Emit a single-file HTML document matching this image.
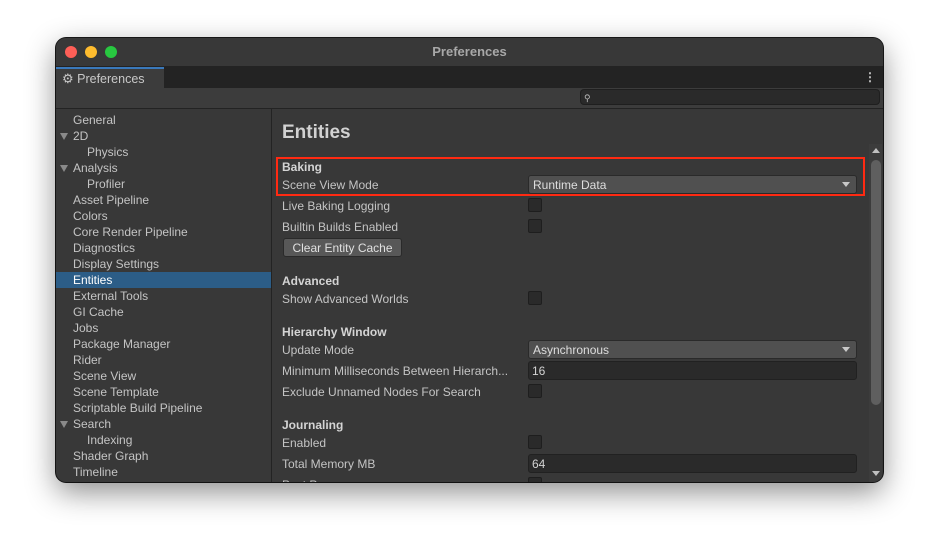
<!DOCTYPE html>
<html><head><style>
*{margin:0;padding:0;box-sizing:border-box}
body{width:939px;height:556px;background:#fff;position:relative;overflow:hidden;font-family:"Liberation Sans",sans-serif;font-size:12px;color:#c4c4c4}
.win{position:absolute;left:56px;top:38px;width:827px;height:444px;border-radius:10px;overflow:hidden;background:#383838;box-shadow:0 10px 30px rgba(0,0,0,.45),0 0 0 1px #1a1a1a}
.t{position:absolute;white-space:nowrap;line-height:16px;padding-top:1px}
.b{font-weight:bold;color:#d4d4d4}
.cb{position:absolute;width:14px;height:14px;background:#2a2a2a;border:1px solid #1e1e1e;border-radius:2px}
.dd{position:absolute;left:472px;width:329px;height:19px;background:#505050;border:1px solid #2a2a2a;border-radius:3px;padding-left:4px;line-height:18px;color:#dedede}
.dd:after{content:"";position:absolute;right:6px;top:6px;border-left:4px solid transparent;border-right:4px solid transparent;border-top:5px solid #c8c8c8}
.fld{position:absolute;left:472px;width:329px;height:19px;background:#2a2a2a;border:1px solid #212121;border-radius:3px;padding-left:3px;line-height:18px;color:#d2d2d2}
.tri{position:absolute;width:0;height:0;border-left:4px solid transparent;border-right:4px solid transparent;border-top:7px solid #8a8a8a}
</style></head><body>
<div class="win">
 <div style="position:absolute;left:0;top:0;width:827px;height:28px;background:#383838"></div>
 <div style="position:absolute;left:9px;top:8px;width:12px;height:12px;border-radius:6px;background:#fe5f57"></div>
 <div style="position:absolute;left:29px;top:8px;width:12px;height:12px;border-radius:6px;background:#febc2e"></div>
 <div style="position:absolute;left:49px;top:8px;width:12px;height:12px;border-radius:6px;background:#28c840"></div>
 <div class="t" style="left:0;width:827px;text-align:center;top:5px;font-weight:bold;color:#a8a8a8;font-size:13px">Preferences</div>
 <div style="position:absolute;left:0;top:28px;width:827px;height:22px;background:#232323"></div>
 <div style="position:absolute;left:0;top:29px;width:108px;height:22px;background:#3c3c3c;border-top:2px solid #3a79bb"></div>
 <div class="t" style="left:6px;top:32px;color:#c8c8c8;font-size:12.5px"><span style="font-size:13px">⚙</span> Preferences</div>
 <div class="t" style="left:808px;top:30px;color:#c8c8c8;font-weight:bold">⋮</div>
 <div style="position:absolute;left:0;top:50px;width:827px;height:21px;background:#3c3c3c;border-bottom:1px solid #232323"></div>
 <div style="position:absolute;left:524px;top:51px;width:300px;height:16px;background:#2a2a2a;border:1px solid #1f1f1f;border-radius:4px"></div>
 <div class="t" style="left:528px;top:51px;font-size:9px;color:#bbb">⚲</div>
 <div style="position:absolute;left:215px;top:71px;width:1px;height:373px;background:#232323"></div>
 <div style="position:absolute;left:0;top:234px;width:215px;height:16px;background:#2c5d87"></div>
 <div class="t" style="left:17px;top:73px">General</div>
 <div class="tri" style="left:4px;top:95px"></div><div class="t" style="left:17px;top:89px">2D</div>
 <div class="t" style="left:31px;top:105px">Physics</div>
 <div class="tri" style="left:4px;top:127px"></div><div class="t" style="left:17px;top:121px">Analysis</div>
 <div class="t" style="left:31px;top:137px">Profiler</div>
 <div class="t" style="left:17px;top:153px">Asset Pipeline</div>
 <div class="t" style="left:17px;top:169px">Colors</div>
 <div class="t" style="left:17px;top:185px">Core Render Pipeline</div>
 <div class="t" style="left:17px;top:201px">Diagnostics</div>
 <div class="t" style="left:17px;top:217px">Display Settings</div>
 <div class="t" style="left:17px;top:233px;color:#fff">Entities</div>
 <div class="t" style="left:17px;top:249px">External Tools</div>
 <div class="t" style="left:17px;top:265px">GI Cache</div>
 <div class="t" style="left:17px;top:281px">Jobs</div>
 <div class="t" style="left:17px;top:297px">Package Manager</div>
 <div class="t" style="left:17px;top:313px">Rider</div>
 <div class="t" style="left:17px;top:329px">Scene View</div>
 <div class="t" style="left:17px;top:345px">Scene Template</div>
 <div class="t" style="left:17px;top:361px">Scriptable Build Pipeline</div>
 <div class="tri" style="left:4px;top:383px"></div><div class="t" style="left:17px;top:377px">Search</div>
 <div class="t" style="left:31px;top:393px">Indexing</div>
 <div class="t" style="left:17px;top:409px">Shader Graph</div>
 <div class="t" style="left:17px;top:425px">Timeline</div>

 <div class="t" style="left:226px;top:82px;font-size:19px;line-height:24px;font-weight:bold;color:#d2d2d2">Entities</div>
 <div class="t b" style="left:226px;top:120px">Baking</div>
 <div class="t" style="left:226px;top:138px">Scene View Mode</div>
 <div class="dd" style="top:137px">Runtime Data</div>
 <div style="position:absolute;left:220px;top:119px;width:589px;height:39px;border:2.5px solid #ff2a12"></div>
 <div class="t" style="left:226px;top:159px">Live Baking Logging</div><div class="cb" style="left:472px;top:160px"></div>
 <div class="t" style="left:226px;top:180px">Builtin Builds Enabled</div><div class="cb" style="left:472px;top:181px"></div>
 <div style="position:absolute;left:227px;top:200px;width:119px;height:19px;background:#585858;border:1px solid #2a2a2a;border-radius:3px;text-align:center;line-height:18px;color:#e0e0e0">Clear Entity Cache</div>
 <div class="t b" style="left:226px;top:234px">Advanced</div>
 <div class="t" style="left:226px;top:252px">Show Advanced Worlds</div><div class="cb" style="left:472px;top:253px"></div>
 <div class="t b" style="left:226px;top:285px">Hierarchy Window</div>
 <div class="t" style="left:226px;top:303px">Update Mode</div>
 <div class="dd" style="top:302px">Asynchronous</div>
 <div class="t" style="left:226px;top:324px">Minimum Milliseconds Between Hierarch...</div>
 <div class="fld" style="top:323px">16</div>
 <div class="t" style="left:226px;top:345px">Exclude Unnamed Nodes For Search</div><div class="cb" style="left:472px;top:346px"></div>
 <div class="t b" style="left:226px;top:378px">Journaling</div>
 <div class="t" style="left:226px;top:396px">Enabled</div><div class="cb" style="left:472px;top:397px"></div>
 <div class="t" style="left:226px;top:417px">Total Memory MB</div>
 <div class="fld" style="top:416px">64</div>
 <div class="t" style="left:226px;top:438px">Post Process</div><div class="cb" style="left:472px;top:439px"></div>

 <div style="position:absolute;left:813px;top:106px;width:13px;height:338px;background:#3c3c3c"></div>
 <div style="position:absolute;left:816px;top:110px;border-left:4px solid transparent;border-right:4px solid transparent;border-bottom:5px solid #c0c0c0"></div>
 <div style="position:absolute;left:815px;top:122px;width:10px;height:245px;background:#5f5f5f;border-radius:5px"></div>
 <div style="position:absolute;left:816px;top:433px;border-left:4px solid transparent;border-right:4px solid transparent;border-top:5px solid #c0c0c0"></div>
</div>
</body></html>
